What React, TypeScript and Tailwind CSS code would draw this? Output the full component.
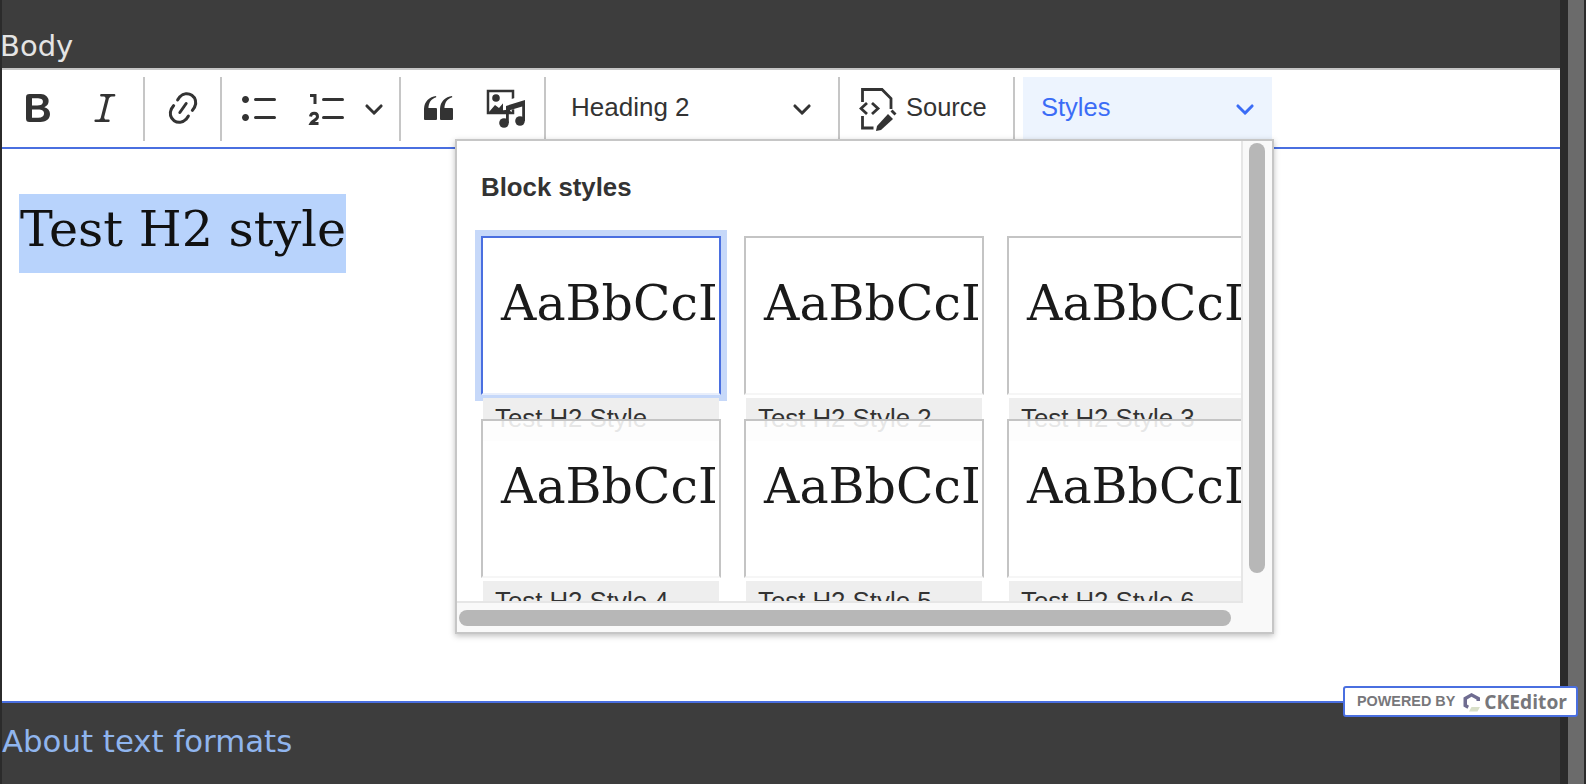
const sans = "font-['Liberation_Sans',Arial,sans-serif]";
const slab = "font-['DejaVu_Serif',serif]";

const styleNames = [
  "Test H2 Style",
  "Test H2 Style 2",
  "Test H2 Style 3",
  "Test H2 Style 4",
  "Test H2 Style 5",
  "Test H2 Style 6",
];

function Separator() {
  return <div className="mt-[7px] h-[64px] w-[2px] shrink-0 bg-[#c6c6c6]" />;
}

function Chevron({ className }: { className: string }) {
  return (
    <svg viewBox="0 0 10 10" className={`h-[20px] w-[20px] fill-current ${className}`}>
      <path d="M.941 4.523a.75.75 0 1 1 1.06-1.06l3.006 3.005 3.005-3.005a.75.75 0 1 1 1.06 1.06l-3.549 3.55a.75.75 0 0 1-1.168-.136L.941 4.523z" />
    </svg>
  );
}

function Icon({ d }: { d: string }) {
  return (
    <svg viewBox="0 0 20 20" className="h-[40px] w-[40px] fill-[#333]">
      <path d={d} />
    </svg>
  );
}

function NumberedIcon() {
  return (
    <svg viewBox="0 0 40 40" className="h-[40px] w-[40px]">
      <path d="M2 6h6.500v10H5.500V9H2z" fill="#333" />
      <path d="M2.500 28.500c.5-4.500 7-4.500 7 .2 0 3-5 4-6.500 6.800h7.500" fill="none" stroke="#333" strokeWidth="3" />
      <rect x="14" y="10" width="22" height="3" rx="1.500" fill="#333" />
      <rect x="14" y="28" width="22" height="3" rx="1.500" fill="#333" />
    </svg>
  );
}

function MediaIcon() {
  return (
    <svg viewBox="0 0 44 44" className="h-[44px] w-[44px]">
      <rect x="4" y="5" width="25" height="22" fill="none" stroke="#333" strokeWidth="2.500" />
      <circle cx="12" cy="12" r="3.800" fill="#333" />
      <path d="M5 26l6-7 4 3 6-7 6 11z" fill="#333" />
      <path d="M21 22v-5l19-5.500v9z" fill="#fff" stroke="#fff" strokeWidth="4" />
      <path d="M22 37V20l19-6v21h-2.800V20.500l-13.400 4V37z" fill="#333" />
      <circle cx="20" cy="37" r="4.800" fill="#333" />
      <circle cx="36" cy="35" r="4.800" fill="#333" />
    </svg>
  );
}

function SourceIcon() {
  return (
    <svg viewBox="0 0 40 46" className="h-[46px] w-[40px]">
      <path
        d="M3.500 17V4.500h19.500l9 9V24M3.500 31v12h11M8 18l-6 5.500 6 5.500M13 18l6 5.500-6 5.500"
        fill="none"
        stroke="#333"
        strokeWidth="2.800"
      />
      <path d="M33 27L19 42" fill="none" stroke="#fff" strokeWidth="11" />
      <path d="M29 29l5 5-12 11-5 1 1-5z" fill="#333" />
      <path d="M31.500 26.500l2-2 4 4-2 2z" fill="#333" />
    </svg>
  );
}

function StyleTile({ name, active }: { name: string; active: boolean }) {
  return (
    <div>
      <div
        className={
          active
            ? "relative h-[159px] border-2 border-[#4a6fe0] border-b-[#e8eefb] bg-white shadow-[0_0_0_6px_#c6d8f9]"
            : "relative h-[159px] border-2 border-[#c4c4c4] border-b-[#f6f6f6] bg-[rgba(255,255,255,0.88)]"
        }
      >
        <div className={`mr-[4px] overflow-hidden whitespace-nowrap pl-[18px] pt-[41px] text-[49px] leading-[49px] text-[#1a1a1a] ${slab}`}>
          AaBbCcDdEe
        </div>
      </div>
      <div className={`relative mx-[2px] mt-[3px] h-[43px] overflow-hidden bg-[#eeeeee] pl-[12px] text-[25.800px] leading-[40px] text-[#333] ${sans}`}>
        {name}
      </div>
    </div>
  );
}

function StylesPanel() {
  return (
    <div className="absolute left-[455px] top-[139px] flex h-[495px] w-[819px] flex-col border-2 border-[#c6c6c6] bg-[#f9f9f9] shadow-[0_2px_6px_rgba(0,0,0,0.25)]">
      <div className="flex h-[462px] shrink-0">
        <div className="w-[786px] shrink-0 overflow-hidden border-b-2 border-r-2 border-[#e6e6e6] bg-white">
          <h3 className={`pl-[24px] pt-[29px] text-[25.800px] font-bold leading-[34px] text-[#333] ${sans}`}>Block styles</h3>
          <div className="ml-[24px] mt-[32px] grid w-[800px] auto-rows-[183px] grid-cols-[240px_240px_240px] gap-x-[23px]">
            {styleNames.map((name, i) => (
              <StyleTile key={name} name={name} active={i === 0} />
            ))}
          </div>
        </div>
        <div className="ml-[6px] mt-[2px] h-[430px] w-[16px] rounded-full bg-[#b7b7b7]" />
      </div>
      <div className="ml-[2px] mt-[7px] h-[16px] w-[772px] rounded-full bg-[#b7b7b7]" />
    </div>
  );
}

function Toolbar() {
  return (
    <div className={`flex h-[79px] border-t-2 border-[#c6c6c6] bg-white pb-[2px] text-[25.500px] text-[#333] ${sans}`}>
      <div className="flex w-[72px] items-center justify-center">
        <Icon d="M10.187 17H5.773c-.637 0-1.092-.138-1.364-.415-.273-.277-.409-.718-.409-1.323V4.738c0-.617.14-1.062.419-1.332.279-.27.73-.406 1.354-.406h4.68c.69 0 1.288.041 1.793.124.506.083.96.242 1.36.478.341.197.644.447.906.75a3.262 3.262 0 0 1 .808 2.162c0 1.401-.722 2.426-2.167 3.075C15.05 10.175 16 11.315 16 13.01a3.756 3.756 0 0 1-2.296 3.504 6.1 6.1 0 0 1-1.517.377c-.571.073-1.238.11-2 .11zm-.217-6.217H7v4.087h3.069c1.977 0 2.965-.69 2.965-2.072 0-.707-.256-1.22-.768-1.537-.512-.319-1.277-.478-2.296-.478zM7 5.13v3.619h2.606c.729 0 1.292-.067 1.69-.2a1.6 1.6 0 0 0 .91-.765c.165-.267.247-.566.247-.897 0-.707-.26-1.176-.778-1.409-.519-.232-1.31-.348-2.375-.348H7z" />
      </div>
      <div className="flex w-[62px] items-center justify-center">
        <Icon d="m9.586 14.633.021.004c-.036.335.095.655.393.962.082.083.173.15.274.201h1.474a.6.6 0 1 1 0 1.2H5.304a.6.6 0 0 1 0-1.2h1.15c.474-.07.809-.182 1.005-.334.157-.122.291-.32.404-.597l2.416-9.55a1.053 1.053 0 0 0-.281-.823 1.12 1.12 0 0 0-.442-.296H8.15a.6.6 0 0 1 0-1.2h6.443a.6.6 0 1 1 0 1.2h-1.195c-.376.056-.65.155-.823.296-.215.175-.423.439-.623.79l-2.366 9.347z" />
      </div>
      <div className="w-[7px]" />
      <Separator />
      <div className="flex w-[75px] items-center justify-center">
        <Icon d="m11.077 15 .991-1.416a.75.75 0 1 1 1.229.86l-1.148 1.64a.748.748 0 0 1-.217.206 5.251 5.251 0 0 1-8.503-5.955.741.741 0 0 1 .12-.274l1.147-1.639a.75.75 0 1 1 1.228.86L4.933 10.7l.006.003a3.75 3.75 0 0 0 6.132 4.294l.006.004zm5.494-5.335a.748.748 0 0 1-.12.274l-1.147 1.639a.75.75 0 1 1-1.228-.86l.86-1.23a3.75 3.75 0 0 0-6.144-4.301l-.86 1.229a.75.75 0 0 1-1.229-.86l1.148-1.64a.748.748 0 0 1 .217-.206 5.251 5.251 0 0 1 8.503 5.955zm-4.563-2.532a.75.75 0 0 1 .184 1.045l-3.155 4.505a.75.75 0 1 1-1.229-.86l3.155-4.506a.75.75 0 0 1 1.045-.184z" />
      </div>
      <Separator />
      <div className="flex w-[76px] items-center justify-center">
        <Icon d="M7 5.75c0 .414.336.75.75.75h9.5a.75.75 0 1 0 0-1.5h-9.5a.75.75 0 0 0-.75.75zm-6 0C1 4.784 1.777 4 2.75 4c.966 0 1.75.777 1.75 1.75 0 .966-.777 1.75-1.75 1.750C1.784 7.5 1 6.723 1 5.750zm6 9c0 .414.336.75.75.75h9.5a.75.75 0 1 0 0-1.5h-9.5a.75.75 0 0 0-.75.75zm-6 0c0-.966.777-1.75 1.75-1.75.966 0 1.75.777 1.75 1.75 0 .966-.777 1.75-1.75 1.750-.966 0-1.75-.777-1.75-1.750z" />
      </div>
      <div className="flex w-[60px] items-center justify-center">
        <NumberedIcon />
      </div>
      <div className="flex w-[41px] items-center pl-[6px]">
        <Chevron className="text-[#333]" />
      </div>
      <Separator />
      <div className="flex w-[74px] items-center justify-center">
        <Icon d="M3 10.423a6.5 6.5 0 0 1 6.056-6.408l.038.67C6.448 5.423 5.354 7.663 5.22 10H9c.552 0 .5.432.5.986v4.511c0 .554-.448.503-1 .503h-5c-.552 0-.5-.449-.5-1.003v-4.574zm8 0a6.5 6.5 0 0 1 6.056-6.408l.038.67c-2.646.739-3.74 2.979-3.873 5.315H17c.552 0 .5.432.5.986v4.511c0 .554-.448.503-1 .503h-5c-.552 0-.5-.449-.5-1.003v-4.574z" />
      </div>
      <div className="flex w-[61px] items-center justify-center">
        <MediaIcon />
      </div>
      <div className="w-[8px]" />
      <Separator />
      <div className="flex w-[292px] items-center pl-[25px]">
        <span className="w-[221px] text-[26px]">Heading 2</span>
        <Chevron className="text-[#333]" />
      </div>
      <Separator />
      <div className="flex w-[173px] items-center gap-[7px] pl-[19px]">
        <SourceIcon />
        <span>Source</span>
      </div>
      <Separator />
      <div className="ml-[8px] mt-[7px] flex h-[70px] w-[249px] items-center bg-[#edf4fe] pb-[9px] pl-[18px] text-[#3b6cf6]">
        <span className="w-[194px]">Styles</span>
        <Chevron className="text-[#3b6cf6]" />
      </div>
    </div>
  );
}

function PoweredBy() {
  return (
    <div className="absolute left-[1343px] top-[686px] flex h-[31px] w-[235px] items-center whitespace-nowrap rounded-[3px] border-2 border-[#4a6fe0] bg-white pl-[12px] text-[#77777b]">
      <span className={`text-[14.400px] font-bold ${sans}`}>POWERED BY</span>
      <svg viewBox="0 0 20 20" className="ml-[7px] h-[20px] w-[20px] shrink-0">
        <path d="M9.500 1L18 5.500V9h-3.500V7.500L9.500 4.800 5 7.500v5l2 1.200-1.500 3L1.500 14.500v-9z" fill="#6f6c91" />
        <path d="M9.500 15h8.500l-2.500 4.500H7z" fill="#d8dfc8" />
      </svg>
      <span className="ml-[2px] font-['Open_Sans',sans-serif] text-[19.200px] font-bold leading-none">CKEditor</span>
    </div>
  );
}

export default function App() {
  return (
    <div className="relative flex h-[784px] w-[1586px] overflow-hidden bg-[#3d3d3d]">
      <div className="w-[2px] shrink-0 bg-[#2b2b2b]" />
      <div className="w-[1558px] shrink-0">
        <div className="-ml-[2px] h-[68px] font-['DejaVu_Sans',sans-serif] text-[29px] leading-[92px] text-[#e4e4e4]">Body</div>
        <Toolbar />
        <div className="h-[556px] border-b-2 border-t-2 border-b-[#4a6fe0] border-t-[#4a6fe0] bg-white pl-[17px] pt-[45px]">
          <span className={`inline-block h-[79px] bg-[#b8d3fc] pl-[1px] text-[49.200px] leading-[70px] text-[#111] ${slab}`}>Test H2 style</span>
        </div>
        <div className="pt-[18px] font-['DejaVu_Sans',sans-serif] text-[30.800px] leading-[40px] text-[#90b5ee]">About text formats</div>
      </div>
      <div className="w-[8px] shrink-0 bg-[#2b2b2b]" />
      <div className="w-[16px] shrink-0 bg-[#6b6b6b]" />
      <div className="w-[2px] shrink-0 bg-[#2b2b2b]" />
      <StylesPanel />
      <PoweredBy />
    </div>
  );
}
